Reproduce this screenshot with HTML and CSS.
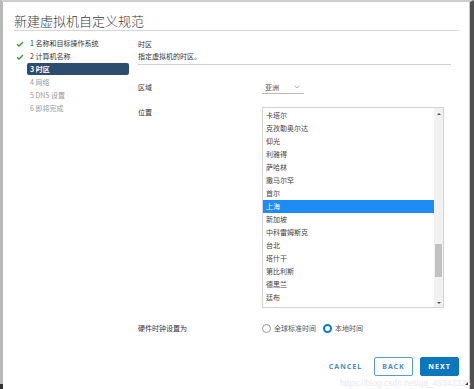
FILE: index.html
```html
<!DOCTYPE html>
<html lang="zh-CN">
<head>
    <meta charset="UTF-8">
    <title>新建虚拟机自定义规范</title>
    <link rel="stylesheet" href="styles.css">
</head>
<body>
    <div class="window">
        <header class="header">
            <h1>新建虚拟机自定义规范</h1>
        </header>

        <div class="body">
            <!-- Kroki kreatora -->
            <ul class="steps">
                <li class="done"><span class="check"><svg width="8" height="6" viewBox="0 0 8 6"><path d="M1 3.2 L3 5 L7 1" fill="none" stroke="#3c9a3c" stroke-width="1.4"/></svg></span>1 名称和目标操作系统</li>
                <li class="done"><span class="check"><svg width="8" height="6" viewBox="0 0 8 6"><path d="M1 3.2 L3 5 L7 1" fill="none" stroke="#3c9a3c" stroke-width="1.4"/></svg></span>2 计算机名称</li>
                <li class="active">3 时区</li>
                <li class="todo">4 网络</li>
                <li class="todo">5 DNS 设置</li>
                <li class="todo">6 即将完成</li>
            </ul>

            <!-- Zawartość kroku -->
            <section class="content">
                <div class="section-title">时区</div>
                <div class="section-desc">指定虚拟机的时区。</div>

                <div class="field field-region">
                    <label class="field-label">区域</label>
                    <div class="select">
                        <span>亚洲</span>
                        <svg width="6" height="4" viewBox="0 0 6 4"><path d="M0.5 0.8 L3 3 L5.5 0.8" fill="none" stroke="#999" stroke-width="0.8"/></svg>
                    </div>
                </div>

                <div class="field field-location">
                    <label class="field-label">位置</label>
                    <div class="listbox">
                        <div class="list-items">
                            <div class="list-item">卡塔尔</div>
                            <div class="list-item">克孜勒奥尔达</div>
                            <div class="list-item">仰光</div>
                            <div class="list-item">利雅得</div>
                            <div class="list-item">萨哈林</div>
                            <div class="list-item">撒马尔罕</div>
                            <div class="list-item">首尔</div>
                            <div class="list-item selected">上海</div>
                            <div class="list-item">新加坡</div>
                            <div class="list-item">中科雷姆斯克</div>
                            <div class="list-item">台北</div>
                            <div class="list-item">塔什干</div>
                            <div class="list-item">第比利斯</div>
                            <div class="list-item">德黑兰</div>
                            <div class="list-item">廷布</div>
                            <div class="list-item">东京</div>
                        </div>
                        <div class="scrollbar">
                            <span class="arrow up"></span>
                            <span class="thumb"></span>
                            <span class="arrow down"></span>
                        </div>
                    </div>
                </div>

                <div class="field field-clock">
                    <label class="field-label">硬件时钟设置为</label>
                    <div class="radios">
                        <span class="radio"></span><span class="radio-text">全球标准时间</span>
                        <span class="radio checked"></span><span class="radio-text">本地时间</span>
                    </div>
                </div>
            </section>
        </div>

        <footer class="footer">
            <button class="btn btn-flat">CANCEL</button>
            <button class="btn btn-outline">BACK</button>
            <button class="btn btn-primary">NEXT</button>
        </footer>

        <div class="watermark">https://blog.csdn.net/qq_45342325</div>
        <div class="resize"></div>
    </div>
    <div class="corner"></div>
</body>
</html>
```

FILE: styles.css
```css
html, body {
    margin: 0;
    padding: 0;
    width: 474px;
    height: 389px;
    overflow: hidden;
    background: #fff;
}
body {
    font-family: "Noto Sans CJK SC", "Noto Sans", sans-serif;
    font-size: 7px;
    color: #333;
}
.window {
    position: relative;
    box-sizing: border-box;
    height: 389px;
    width: 474px;
    border-top: 2px solid #cdcdcd;
    border-left: 3px solid #b8b8b8;
    border-right: 4px solid #505050;
    box-shadow: inset -1px 0 0 #c8c8c8;
    display: flex;
    flex-direction: column;
}
.header {
    margin: 0 11px;
    padding-top: 10px;
    border-bottom: 1px solid #d6d6d6;
}
.header h1 {
    margin: 0;
    font-size: 13px;
    line-height: 18px;
    font-weight: 300;
    color: #3a3a3a;
}
.body {
    display: flex;
    padding: 6px 0 0 11px;
}
/* Kroki */
.steps {
    list-style: none;
    margin: 0;
    padding: 0;
    width: 115px;
}
.steps li {
    display: flex;
    align-items: center;
    height: 13px;
    line-height: 13px;
}
.steps .check {
    width: 16px;
    display: flex;
    padding-left: 2px;
    box-sizing: border-box;
}
.steps .done {
    color: #333;
}
.steps .todo {
    color: #999;
    padding-left: 16px;
}
.steps .active {
    margin: 0 0 0 13px;
    padding-left: 3px;
    height: 12px;
    margin-bottom: 1px;
    background: #2e4d6e;
    border-radius: 2px;
    color: #fff;
    font-weight: bold;
}
/* Zawartość */
.content {
    margin-left: 9px;
    width: 313px;
    padding-top: 1px;
}
.section-title, .section-desc {
    line-height: 12px;
}
.section-title {
    color: #333;
}
.section-desc {
    padding-bottom: 2px;
    border-bottom: 1px solid #cfcfcf;
}
.field {
    display: flex;
}
.field-label {
    width: 124px;
    flex-shrink: 0;
    line-height: 12px;
    color: #333;
}
.field-region {
    margin-top: 15px;
    align-items: center;
}
.select {
    width: 39px;
    height: 13px;
    padding-left: 3px;
    display: flex;
    align-items: center;
    justify-content: space-between;
    border-bottom: 1px solid #bcbcbc;
    color: #444;
}
.select svg {
    margin-right: 4px;
}
.field-location {
    margin-top: 13px;
    align-items: flex-start;
}
.field-location .field-label {
    margin-top: -1px;
}
.listbox {
    width: 180px;
    height: 199px;
    border: 1px solid #d4d4d4;
    display: flex;
    overflow: hidden;
    box-shadow: 0 0 1px #e4e4e4;
}
.list-items {
    flex: 1;
    padding-top: 1px;
}
.list-item {
    height: 13px;
    line-height: 13px;
    padding-left: 3px;
    color: #444;
}
.list-item.selected {
    background: #1e8cf5;
    color: #fff;
}
.scrollbar {
    width: 9px;
    background: #f1f1f1;
    display: flex;
    flex-direction: column;
    align-items: center;
}
.arrow {
    width: 0;
    height: 0;
    border-left: 2px solid transparent;
    border-right: 2px solid transparent;
}
.arrow.up {
    margin-top: 5px;
    border-bottom: 2px solid #505050;
}
.arrow.down {
    margin-top: 25px;
    border-top: 2px solid #505050;
}
.thumb {
    margin-top: 129px;
    width: 7px;
    height: 33px;
    background: #c1c1c1;
}
.field-clock {
    margin-top: 14px;
    align-items: center;
}
.radios {
    display: flex;
    align-items: center;
}
.radio {
    box-sizing: border-box;
    width: 9px;
    height: 9px;
    border: 1px solid #999;
    border-radius: 50%;
    margin-right: 3px;
}
.radio.checked {
    border: 2.5px solid #0a7bc8;
    background: #fff;
    margin-left: 7px;
}
.radio-text {
    line-height: 12px;
    color: #555;
}
/* Przyciski */
.footer {
    display: flex;
    justify-content: flex-end;
    padding: 0 11px 0 0;
    margin-top: 23px;
}
.btn {
    box-sizing: border-box;
    height: 19px;
    margin-left: 7px;
    font-family: "Noto Sans", sans-serif;
    font-size: 7px;
    font-weight: bold;
    letter-spacing: 1px;
    border-radius: 2px;
    padding: 0;
    cursor: pointer;
}
.btn-flat {
    width: 41px;
    margin-right: 1px;
    background: none;
    border: none;
    color: #4a8ec2;
}
.btn-outline {
    width: 39px;
    background: #fff;
    border: 1px solid #5c9acb;
    color: #4a8ec2;
}
.btn-primary {
    width: 39px;
    background: #0b78be;
    border: 1px solid #0b78be;
    color: #fff;
}
.watermark {
    position: absolute;
    left: 337px;
    top: 376px;
    font-family: "Liberation Sans", sans-serif;
    font-size: 8.5px;
    color: #e6e9ee;
    white-space: nowrap;
}
.resize {
    position: absolute;
    right: 2px;
    bottom: 4px;
    width: 0;
    height: 0;
    border-left: 3px solid transparent;
    border-bottom: 3px solid #444;
}
.corner {
    position: absolute;
    left: 0;
    top: 384px;
    width: 3px;
    height: 5px;
    background: #333;
}
```
